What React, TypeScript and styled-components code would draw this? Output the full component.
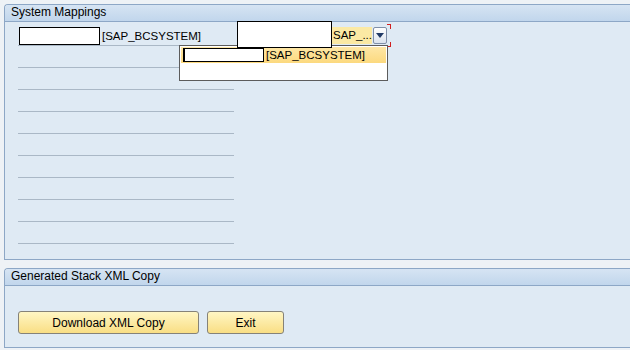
import React from 'react';
import styled, { createGlobalStyle } from 'styled-components';

const GlobalStyle = createGlobalStyle`
  html, body {
    margin: 0;
    padding: 0;
    background: #eef2f6;
    font-family: "Liberation Sans", Arial, sans-serif;
    font-size: 12px;
    color: #000;
    overflow: hidden;
  }
`;

const Page = styled.div`
  width: 630px;
  height: 350px;
  padding: 4px 0 0 4px;
  box-sizing: border-box;
  display: flex;
  flex-direction: column;
  gap: 8px;
  overflow: hidden;
`;

const Group = styled.section`
  position: relative;
  width: 640px;
  flex-shrink: 0;
  border: 1px solid #8da7c6;
  border-right: none;
  border-top-left-radius: 4px;
  background: #dfeaf4;
  display: flex;
  flex-direction: column;
`;

const Header = styled.header`
  height: 16px;
  line-height: 15px;
  padding-left: 6px;
  border-bottom: 1px solid #8da7c6;
  border-top-left-radius: 3px;
  background: linear-gradient(#d6e4f3, #c1d6ec);
  white-space: nowrap;
`;

const Body = styled.div<{ $pad: string; $h: number }>`
  box-sizing: border-box;
  height: ${p => p.$h}px;
  padding: ${p => p.$pad};
`;

const Lines = styled.div`
  width: 216px;
  display: flex;
  flex-direction: column;
`;

const Row = styled.div`
  height: 21px;
  border-bottom: 1px solid #aab8c6;
  display: flex;
  align-items: flex-end;
  gap: 2px;
  padding-left: 1px;
`;

const Field = styled.span<{ $w: number }>`
  display: inline-block;
  flex-shrink: 0;
  box-sizing: border-box;
  width: ${p => p.$w}px;
  height: 18px;
  background: #fff;
  border: 1px solid #000;
`;

const Label = styled.span`
  font-size: 11.5px;
  line-height: 18px;
  white-space: nowrap;
`;

const Combo = styled.div`
  position: absolute;
  left: 326px;
  top: 22px;
  height: 17px;
  display: flex;
  align-items: stretch;
`;

const ComboText = styled.span`
  width: 41px;
  padding-left: 2px;
  box-sizing: border-box;
  background: #fbe9a4;
  font-size: 11.5px;
  line-height: 17px;
  white-space: nowrap;
  overflow: hidden;
`;

const ComboButton = styled.span`
  width: 14px;
  margin-left: 1px;
  box-sizing: border-box;
  border: 1px solid #7f8fa8;
  border-radius: 2px;
  background: linear-gradient(#ffffff, #dbe3ee);
  display: flex;
  align-items: center;
  justify-content: center;
`;

const Bracket = styled.span<{ $top: boolean }>`
  position: absolute;
  right: -4px;
  ${p => (p.$top ? 'top: -3px;' : 'bottom: -3px;')}
  width: 3px;
  height: 4px;
  border-right: 1px solid #d02020;
  ${p => (p.$top ? 'border-top: 1px solid #d02020;' : 'border-bottom: 1px solid #d02020;')}
`;

const Popup = styled.div`
  position: absolute;
  left: 232px;
  top: 16px;
  width: 95px;
  height: 27px;
  box-sizing: border-box;
  background: #fff;
  border: 1px solid #000;
  z-index: 2;
`;

const DropList = styled.div`
  position: absolute;
  left: 174px;
  top: 40px;
  width: 209px;
  height: 36px;
  box-sizing: border-box;
  background: #fff;
  border: 1px solid #5c5c5c;
  padding: 1px;
  z-index: 1;
`;

const DropItem = styled.div`
  height: 16px;
  display: flex;
  align-items: center;
  gap: 2px;
  padding-left: 2px;
  background: linear-gradient(#fee7a6, #fcd97e);
`;

const ItemField = styled.span`
  display: inline-block;
  flex-shrink: 0;
  box-sizing: border-box;
  width: 81px;
  height: 14px;
  background: #fff;
  border: 1px solid #000;
  border-left-width: 2px;
`;

const Buttons = styled.div`
  display: flex;
  gap: 8px;
`;

const Button = styled.button<{ $w: number }>`
  width: ${p => p.$w}px;
  height: 23px;
  padding: 0;
  border: 1px solid #858278;
  border-radius: 3px;
  background: linear-gradient(#fff6c4, #f9de84);
  font-family: inherit;
  font-size: 12px;
  color: #000;
`;

const rows = Array.from({ length: 10 }, (_, i) => i);

const App: React.FC = () => {
  return (
    <>
      <GlobalStyle />
      <Page>
        <Group>
          <Header>System Mappings</Header>
          <Body $h={237} $pad="2px 0 0 13px">
            <Lines>
              {rows.map(i => (
                <Row key={i}>
                  {i === 0 && (
                    <>
                      <Field $w={81} />
                      <Label>[SAP_BCSYSTEM]</Label>
                    </>
                  )}
                </Row>
              ))}
            </Lines>
          </Body>
          <Combo>
            <ComboText>SAP_...</ComboText>
            <ComboButton>
              <svg width="8" height="5" viewBox="0 0 8 5">
                <path d="M0 0h8L4 5z" fill="#203a66" />
              </svg>
            </ComboButton>
            <Bracket $top />
            <Bracket $top={false} />
          </Combo>
          <Popup />
          <DropList>
            <DropItem>
              <ItemField />
              <Label>[SAP_BCSYSTEM]</Label>
            </DropItem>
          </DropList>
        </Group>
        <Group>
          <Header>Generated Stack XML Copy</Header>
          <Body $h={61} $pad="25px 0 0 13px">
            <Buttons>
              <Button $w={181}>Download XML Copy</Button>
              <Button $w={77}>Exit</Button>
            </Buttons>
          </Body>
        </Group>
      </Page>
    </>
  );
};

export default App;
